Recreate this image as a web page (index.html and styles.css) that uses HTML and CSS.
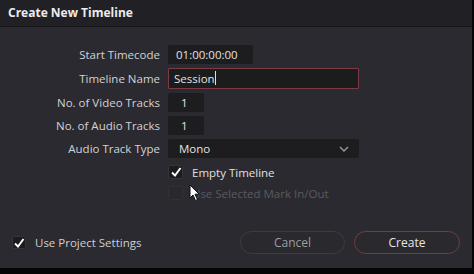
FILE: index.html
```html
<!DOCTYPE html>
<html lang="en">
<head>
    <meta charset="UTF-8">
    <title>Create New Timeline</title>
    <link rel="stylesheet" href="styles.css">
</head>
<body>
    <div class="dialog">
        <div class="titlebar">Create New Timeline</div>

        <div class="form">
            <label class="label">Start Timecode</label>
            <div class="field field-tc">01:00:00:00</div>

            <label class="label">Timeline Name</label>
            <div class="field field-name">Session<span class="caret"></span></div>

            <label class="label">No. of Video Tracks</label>
            <div class="field field-num">1</div>

            <label class="label">No. of Audio Tracks</label>
            <div class="field field-num">1</div>

            <label class="label">Audio Track Type</label>
            <div class="field field-select">
                <span>Mono</span>
                <svg class="chevron" width="10" height="6" viewBox="0 0 10 6">
                    <path d="M1 1 L5 5 L9 1" fill="none" stroke="#9a9a9e" stroke-width="1.4"/>
                </svg>
            </div>
        </div>

        <div class="checks">
            <div class="check-row">
                <span class="box checked">
                    <svg width="12" height="12" viewBox="0 0 12 12"><path d="M2 6.5 L5 9.5 L10.5 2" fill="none" stroke="#fff" stroke-width="1.9"/></svg>
                </span>
                <span class="check-text">Empty Timeline</span>
            </div>
            <div class="check-row disabled">
                <span class="box"></span>
                <span class="check-text">Use Selected Mark In/Out</span>
            </div>
            <!-- mouse pointer from the capture -->
            <svg class="pointer" width="12" height="18" viewBox="0 0 12 18">
                <path d="M1 1 L1 14 L4 11 L6.5 16.5 L8.5 15.5 L6 10.2 L10.2 10.2 Z" fill="#fff" stroke="#111" stroke-width="1"/>
            </svg>
        </div>

        <div class="footer">
            <div class="check-row project">
                <span class="box checked">
                    <svg width="12" height="12" viewBox="0 0 12 12"><path d="M2 6.5 L5 9.5 L10.5 2" fill="none" stroke="#fff" stroke-width="1.9"/></svg>
                </span>
                <span class="check-text">Use Project Settings</span>
            </div>
            <div class="buttons">
                <button class="btn">Cancel</button>
                <button class="btn btn-create">Create</button>
            </div>
        </div>
    </div>
</body>
</html>
```

FILE: styles.css
```css
* {
    margin: 0;
    padding: 0;
    box-sizing: border-box;
}

body {
    width: 474px;
    height: 274px;
    background: #050506;
    font-family: "Open Sans", "DejaVu Sans", sans-serif;
    color: #d6d6d8;
    overflow: hidden;
}

.dialog {
    width: 472px;
    height: 268px;
    background: #2b2a30;
    display: flex;
    flex-direction: column;
    position: relative;
}

.titlebar {
    height: 27px;
    padding: 4px 0 0 8px;
    background: #212125;
    border-bottom: 1px solid #17171a;
    font-size: 12px;
    font-weight: 700;
    color: #ececee;
}

.form {
    display: grid;
    grid-template-columns: 160px auto;
    column-gap: 8px;
    row-gap: 4px;
    margin-top: 18px;
    align-items: center;
}

.label {
    text-align: right;
    font-size: 11.5px;
    color: #d2d2d4;
}

.field {
    height: 19px;
    background: #1d1d20;
    border-radius: 2px;
    font-size: 11.5px;
    line-height: 19px;
    padding-left: 8px;
    color: #e2e2e4;
}

.field-tc {
    width: 85px;
}

.field-name {
    width: 191px;
    height: 21px;
    line-height: 19px;
    border: 1px solid #7d3a42;
    background: #1b1c1c;
    padding-left: 5px;
    border-radius: 1px;
}

.caret {
    display: inline-block;
    width: 1px;
    height: 14px;
    background: #e0e0e0;
    vertical-align: -2px;
}

.field-num {
    width: 36px;
    padding-left: 13px;
}

.field-select {
    width: 191px;
    display: flex;
    align-items: center;
    justify-content: space-between;
    padding: 0 10px 0 11px;
}

.checks {
    margin-top: 7px;
    margin-left: 168px;
    display: flex;
    flex-direction: column;
    gap: 7px;
    position: relative;
}

.check-row {
    display: flex;
    align-items: center;
    gap: 9px;
    height: 14px;
}

.box {
    width: 15px;
    height: 14px;
    background: #1c1c1f;
    border: 1px solid #34343a;
    border-radius: 2px;
    display: flex;
    align-items: center;
    justify-content: center;
}

.check-text {
    font-size: 11.5px;
    color: #e0e0e2;
}

.disabled .box {
    background: #29292d;
    border-color: #303035;
}

.disabled .check-text {
    color: #5a5a60;
}

.pointer {
    position: absolute;
    left: 21px;
    top: 19px;
}

.footer {
    margin-top: auto;
    padding: 0 12px 14px 12px;
    display: flex;
    align-items: center;
    justify-content: space-between;
}

.project .box {
    width: 14px;
    height: 13px;
}

.project .check-text {
    color: #cfcfd2;
}

.buttons {
    display: flex;
    gap: 9px;
}

.btn {
    width: 105px;
    height: 23px;
    border-radius: 12px;
    background: #29292e;
    border: 1px solid #3c3c42;
    font-family: "Open Sans", "DejaVu Sans", sans-serif;
    font-size: 12px;
    color: #9d9da2;
}

.btn-create {
    width: 106px;
    border: 1px solid #7a3a42;
    color: #e6e6e8;
}
```
